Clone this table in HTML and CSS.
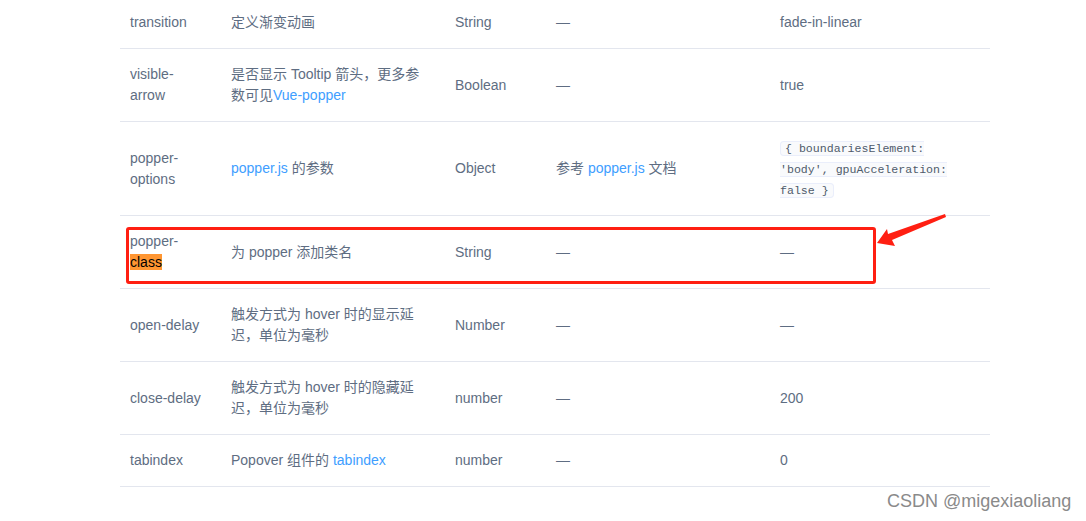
FILE: index.html
```html
<!DOCTYPE html>
<html lang="zh">
<head>
<meta charset="utf-8">
<link rel="stylesheet" href="styles.css">
</head>
<body>
<div class="page">
  <table class="attrs">
    <colgroup>
      <col class="c1"><col class="c2"><col class="c3"><col class="c4"><col class="c5">
    </colgroup>
    <tbody>
      <tr>
        <td class="name">transition</td>
        <td class="desc">定义渐变动画</td>
        <td>String</td>
        <td>—</td>
        <td>fade-in-linear</td>
      </tr>
      <tr>
        <td class="name">visible-arrow</td>
        <td class="desc">是否显示 Tooltip 箭头，更多参数可见<a class="link">Vue-popper</a></td>
        <td>Boolean</td>
        <td>—</td>
        <td>true</td>
      </tr>
      <tr>
        <td class="name">popper-options</td>
        <td class="desc"><a class="link">popper.js</a> 的参数</td>
        <td>Object</td>
        <td>参考 <a class="link">popper.js</a> 文档</td>
        <td class="last"><code class="code">{ boundariesElement: 'body', gpuAcceleration: false }</code></td>
      </tr>
      <tr>
        <td class="name">popper-<br><span class="hit">class</span></td>
        <td class="desc">为 popper 添加类名</td>
        <td>String</td>
        <td>—</td>
        <td>—</td>
      </tr>
      <tr>
        <td class="name">open-delay</td>
        <td class="desc">触发方式为 hover 时的显示延迟，单位为毫秒</td>
        <td>Number</td>
        <td>—</td>
        <td>—</td>
      </tr>
      <tr>
        <td class="name">close-delay</td>
        <td class="desc">触发方式为 hover 时的隐藏延迟，单位为毫秒</td>
        <td>number</td>
        <td>—</td>
        <td>200</td>
      </tr>
      <tr>
        <td class="name">tabindex</td>
        <td class="desc">Popover 组件的 <a class="link">tabindex</a></td>
        <td>number</td>
        <td>—</td>
        <td>0</td>
      </tr>
    </tbody>
  </table>
</div>
<div class="redbox"></div>
<svg class="arrow" width="1086" height="521" viewBox="0 0 1086 521">
  <polygon points="877,243 887,229 888,234 945,214 946,217 892,240 895,246" fill="#ff1f12"/>
</svg>
<div class="watermark">CSDN @migexiaoliang</div>
</body>
</html>
```

FILE: styles.css
```css
html, body {
  margin: 0;
  padding: 0;
  background: #ffffff;
}
body {
  width: 1086px;
  height: 521px;
  overflow: hidden;
  position: relative;
  font-family: "Liberation Sans", "Noto Sans CJK SC", sans-serif;
  font-size: 14px;
  color: #5e6d82;
}
.page {
  margin-top: -3px;
  padding-left: 120px;
}
.attrs {
  width: 870px;
  border-collapse: collapse;
  table-layout: fixed;
}
.c1 { width: 101px; }
.c2 { width: 224px; }
.c3 { width: 101px; }
.c4 { width: 224px; }
.c5 { width: 220px; }
.attrs td {
  padding: 15px 10px;
  line-height: 21px;
  border-bottom: 1px solid #e3e6ee;
  vertical-align: middle;
  word-break: break-word;
}
.attrs td.name {
  padding-right: 16px;
}
.attrs td.desc {
  padding-right: 22px;
}
.attrs td.last {
  padding-right: 30px;
}
.link {
  color: #409eff;
  text-decoration: none;
}
.code {
  font-family: "Liberation Mono", monospace;
  font-size: 11.6px;
  line-height: 16px;
  color: #4f5b6b;
  background: #f9fafc;
  border: 1px solid #eaeefb;
  border-radius: 4px;
  padding: 0 4px;
}
.hit {
  background: #ff9632;
  color: #000000;
}
.redbox {
  position: absolute;
  left: 126px;
  top: 227px;
  width: 744px;
  height: 51px;
  border: 3px solid #ff1f12;
  border-radius: 3px;
}
.arrow {
  position: absolute;
  left: 0;
  top: 0;
}
.watermark {
  position: absolute;
  left: 887px;
  top: 491px;
  font-family: "Liberation Sans", sans-serif;
  font-size: 18px;
  color: #8a8a8a;
}
```
